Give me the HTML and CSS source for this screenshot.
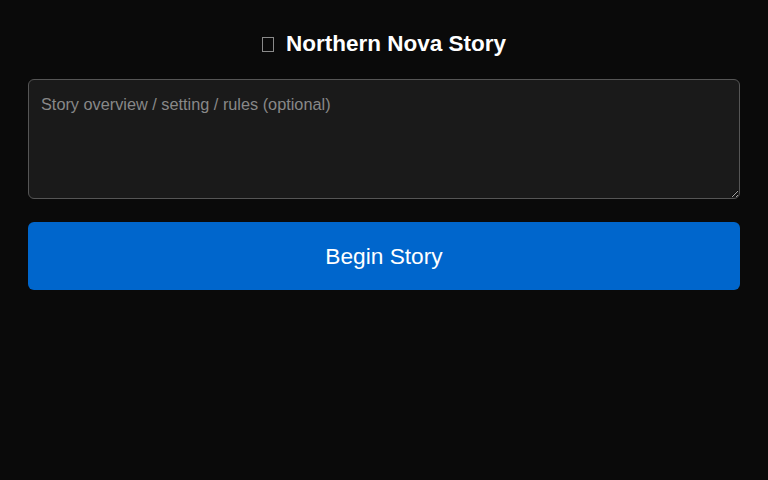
FILE: index.html
```html
<!DOCTYPE html>
<html>
<head>
<meta charset="utf-8">
<link rel="stylesheet" href="styles.css">
</head>
<body>
<div class="app">
  <h1 class="title"><span class="tofu"></span>Northern Nova Story</h1>
  <textarea class="overview" placeholder="Story overview / setting / rules (optional)"></textarea>
  <button class="begin">Begin Story</button>
</div>
</body>
</html>
```
FILE: styles.css
```css
html, body {
  margin: 0;
  padding: 0;
  background: #0a0a0a;
  height: 100%;
}
.app {
  padding: 31px 28px;
  display: flex;
  flex-direction: column;
  font-family: "Liberation Sans", Arial, sans-serif;
}
.title {
  margin: 0 0 22px;
  font-size: 22.5px;
  line-height: 26px;
  font-weight: bold;
  color: #ffffff;
  text-align: center;
  display: flex;
  justify-content: center;
  align-items: center;
  gap: 12px;
}
.tofu {
  display: inline-block;
  width: 12px;
  height: 15px;
  border: 1px solid #8a8a8a;
  box-sizing: border-box;
  margin-top: 0;
}
.overview {
  display: block;
  box-sizing: border-box;
  width: 100%;
  height: 120px;
  margin: 0 0 23px;
  padding: 12px;
  background: #1a1a1a;
  border: 1px solid #555;
  border-radius: 6px;
  color: #ddd;
  font-family: "Liberation Sans", Arial, sans-serif;
  font-size: 16.3px;
  line-height: 1.5;
  resize: vertical;
}
.overview::placeholder {
  color: #888;
}
.begin {
  display: block;
  width: 100%;
  height: 68px;
  border: none;
  border-radius: 6px;
  background: #0066cc;
  color: #fff;
  font-family: "Liberation Sans", Arial, sans-serif;
  font-size: 22.7px;
  cursor: pointer;
}
```
